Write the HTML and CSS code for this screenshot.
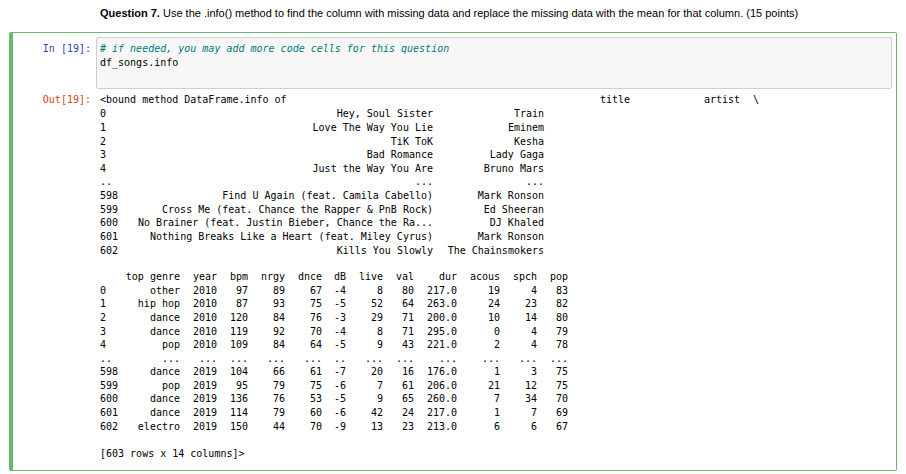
FILE: index.html
```html
<!DOCTYPE html>
<html lang="en">
<head>
    <meta charset="UTF-8">
    <title>Question 7</title>
    <meta name="viewport" content="width=device-width, initial-scale=1.0">
    <link rel="stylesheet" href="styles.css">
</head>
<body>

<p class="question"><strong>Question 7.</strong> Use the .info() method to find the column with missing data and replace the missing data with the mean for that column. (15 points)</p>

<div class="cell">
    <div class="row">
        <div class="prompt in">In [19]:</div>
        <pre class="code"><span class="comment"># if needed, you may add more code cells for this question</span>
df_songs.info</pre>
    </div>

    <div class="row output">
        <div class="prompt out">Out[19]:</div>
        <div class="result">
            <div class="head">
                <span class="bound">&lt;bound method DataFrame.info of</span>
                <span class="title">title</span>
                <span class="artist">artist</span>
                <span class="slash">\</span>
            </div>
            <table class="songs">
                <colgroup><col class="c-id"><col class="c-title"><col class="c-artist"></colgroup>
                <tr><th>0</th><td>Hey, Soul Sister</td><td>Train</td></tr>
                <tr><th>1</th><td>Love The Way You Lie</td><td>Eminem</td></tr>
                <tr><th>2</th><td>TiK ToK</td><td>Kesha</td></tr>
                <tr><th>3</th><td>Bad Romance</td><td>Lady Gaga</td></tr>
                <tr><th>4</th><td>Just the Way You Are</td><td>Bruno Mars</td></tr>
                <tr><th>..</th><td>...</td><td>...</td></tr>
                <tr><th>598</th><td>Find U Again (feat. Camila Cabello)</td><td>Mark Ronson</td></tr>
                <tr><th>599</th><td>Cross Me (feat. Chance the Rapper &amp; PnB Rock)</td><td>Ed Sheeran</td></tr>
                <tr><th>600</th><td>No Brainer (feat. Justin Bieber, Chance the Ra...</td><td>DJ Khaled</td></tr>
                <tr><th>601</th><td>Nothing Breaks Like a Heart (feat. Miley Cyrus)</td><td>Mark Ronson</td></tr>
                <tr><th>602</th><td>Kills You Slowly</td><td>The Chainsmokers</td></tr>
            </table>

            <table class="stats">
                <colgroup>
                    <col class="c-id"><col class="c-genre"><col class="c-m"><col class="c-s"><col class="c-m"><col class="c-m"><col class="c-xs">
                    <col class="c-m"><col class="c-s"><col class="c-l"><col class="c-l"><col class="c-m"><col class="c-s">
                </colgroup>
                <tr><th></th><th>top genre</th><th>year</th><th>bpm</th><th>nrgy</th><th>dnce</th><th>dB</th><th>live</th><th>val</th><th>dur</th><th>acous</th><th>spch</th><th>pop</th></tr>
                <tr><th>0</th><td>other</td><td>2010</td><td>97</td><td>89</td><td>67</td><td>-4</td><td>8</td><td>80</td><td>217.0</td><td>19</td><td>4</td><td>83</td></tr>
                <tr><th>1</th><td>hip hop</td><td>2010</td><td>87</td><td>93</td><td>75</td><td>-5</td><td>52</td><td>64</td><td>263.0</td><td>24</td><td>23</td><td>82</td></tr>
                <tr><th>2</th><td>dance</td><td>2010</td><td>120</td><td>84</td><td>76</td><td>-3</td><td>29</td><td>71</td><td>200.0</td><td>10</td><td>14</td><td>80</td></tr>
                <tr><th>3</th><td>dance</td><td>2010</td><td>119</td><td>92</td><td>70</td><td>-4</td><td>8</td><td>71</td><td>295.0</td><td>0</td><td>4</td><td>79</td></tr>
                <tr><th>4</th><td>pop</td><td>2010</td><td>109</td><td>84</td><td>64</td><td>-5</td><td>9</td><td>43</td><td>221.0</td><td>2</td><td>4</td><td>78</td></tr>
                <tr><th>..</th><td>...</td><td>...</td><td>...</td><td>...</td><td>...</td><td>..</td><td>...</td><td>...</td><td>...</td><td>...</td><td>...</td><td>...</td></tr>
                <tr><th>598</th><td>dance</td><td>2019</td><td>104</td><td>66</td><td>61</td><td>-7</td><td>20</td><td>16</td><td>176.0</td><td>1</td><td>3</td><td>75</td></tr>
                <tr><th>599</th><td>pop</td><td>2019</td><td>95</td><td>79</td><td>75</td><td>-6</td><td>7</td><td>61</td><td>206.0</td><td>21</td><td>12</td><td>75</td></tr>
                <tr><th>600</th><td>dance</td><td>2019</td><td>136</td><td>76</td><td>53</td><td>-5</td><td>9</td><td>65</td><td>260.0</td><td>7</td><td>34</td><td>70</td></tr>
                <tr><th>601</th><td>dance</td><td>2019</td><td>114</td><td>79</td><td>60</td><td>-6</td><td>42</td><td>24</td><td>217.0</td><td>1</td><td>7</td><td>69</td></tr>
                <tr><th>602</th><td>electro</td><td>2019</td><td>150</td><td>44</td><td>70</td><td>-9</td><td>13</td><td>23</td><td>213.0</td><td>6</td><td>6</td><td>67</td></tr>
            </table>
            <div class="shape">[603 rows x 14 columns]&gt;</div>
        </div>
    </div>
</div>

</body>
</html>
```
FILE: styles.css
```css
body { margin: 0; padding: 6px 9px 3px; background: #fff; color: #000; }
.question { margin: 0 0 12px; padding-left: 91px; font: 11px/14px "Liberation Sans", Arial, sans-serif; }

.cell { box-sizing: border-box; padding: 4px 4px 9px 0; border: 1px solid #66bb6a; border-left-width: 4px; border-radius: 2px; font: 10px/14px "DejaVu Sans Mono", monospace; }
.row { display: flex; }
.prompt { box-sizing: border-box; width: 83px; flex-shrink: 0; padding: 5px 5px 0 0; text-align: right; }
.in { color: #303f9f; }
.out { color: #d84315; }
.code { box-sizing: border-box; flex: 1; min-height: 52px; margin: 0; padding: 4px 3px; background: #f7f7f7; border: 1px solid #cfcfcf; border-radius: 2px; font: inherit; }
.comment { color: #007979; font-style: italic; }

.output { padding-top: 4px; }
.output .prompt { padding-top: 0; }
.result { padding-left: 4px; white-space: nowrap; }
.head { display: flex; text-align: right; }
.bound { width: 191px; text-align: left; }
.title { width: 339px; }
.artist { width: 110px; }
.slash { width: 19px; }

/* rows share the table height, a little under 14px each */
table { table-layout: fixed; border-collapse: collapse; line-height: 13px; text-align: right; }
th, td { padding: 0; font-weight: normal; }
th:first-child { text-align: left; }
.songs { width: 444px; height: 150px; }
.stats { width: 468px; height: 163px; margin: 13px 0 14px; }
.c-id { width: 24px; }
.c-title { width: 309px; }
.c-artist { width: 111px; }
.c-genre { width: 56px; }
.c-xs { width: 24px; }
.c-s { width: 31px; }
.c-m { width: 37px; }
.c-l { width: 43px; }
```
